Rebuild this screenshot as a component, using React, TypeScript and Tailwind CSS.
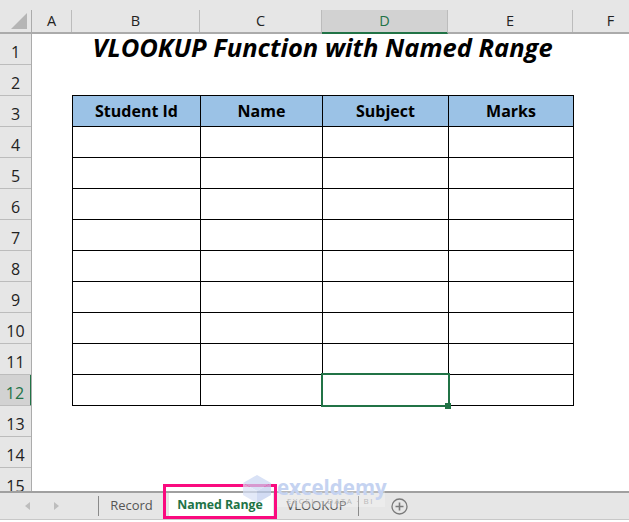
const columns = [
  { label: 'A', width: 'w-[40px]' },
  { label: 'B', width: 'w-[128px]' },
  { label: 'C', width: 'w-[122px]' },
  { label: 'D', width: 'w-[126px]', active: true },
  { label: 'E', width: 'w-[125px]' },
  { label: 'F', width: 'w-[76px]' },
];

const rowNumbers = [1, 2, 3, 4, 5, 6, 7, 8, 9, 10, 11, 12, 13, 14];
const headers = ['Student Id', 'Name', 'Subject', 'Marks'];
const cellWidths = ['w-[128px]', 'w-[122px]', 'w-[126px]', 'w-[125px]'];
const emptyRows = [4, 5, 6, 7, 8, 9, 10, 11, 12];

const App = () => {
  return (
    <div className="relative flex h-[522px] w-[629px] flex-col overflow-hidden bg-[#e6e6e6] font-['Open_Sans',sans-serif] text-[#222]">
      {/* Column headers */}
      <div className="mt-[10px] flex h-[24px] shrink-0 border-b-2 border-[#ababab]">
        <div className="flex w-[32px] shrink-0 items-end justify-end border-r border-[#ababab] pr-[4px] pb-[3px]">
          <svg width="16" height="16" viewBox="0 0 16 16">
            <path d="M16 0V16H0Z" fill="#b5b5b5" />
          </svg>
        </div>
        {columns.map((col) => (
          <div
            key={col.label}
            className={`flex shrink-0 items-center justify-center border-r border-[#bcbcbc] pb-[1px] text-[14.5px] ${col.width} ${
              col.active ? '-mb-[2px] border-b-2 border-b-[#217346] bg-[#d2d2d2] text-[#217346]' : ''
            }`}
          >
            {col.label}
          </div>
        ))}
      </div>

      <div className="flex h-[457px] shrink-0">
        {/* Row headers */}
        <div className="w-[32px] shrink-0 overflow-hidden border-r border-[#ababab]">
          {rowNumbers.map((n) => (
            <div
              key={n}
              className={`flex h-[31px] items-center justify-center border-b border-[#bcbcbc] pt-[5px] text-[16px] ${
                n === 12 ? '-mr-px border-r-2 border-r-[#217346] bg-[#d2d2d2] text-[#217346]' : ''
              }`}
            >
              {n}
            </div>
          ))}
          <div className="flex h-[31px] items-center justify-center pt-[5px] text-[16px]">15</div>
        </div>

        {/* Sheet */}
        <div className="relative flex-1 bg-white pl-[40px]">
          <div className="-mt-px flex h-[29px] w-[501px] items-center justify-center text-[25.5px] leading-none font-bold text-black italic">
            VLOOKUP Function with Named Range
          </div>
          <div className="h-[33px]" />
          <div className="w-[502px] border-r border-b border-black">
            <div className="flex h-[31px] bg-[#9bc2e6]">
              {headers.map((h, i) => (
                <div
                  key={h}
                  className={`flex items-center justify-center border-t border-l border-black text-[16px] font-bold text-black ${cellWidths[i]}`}
                >
                  {h}
                </div>
              ))}
            </div>
            {emptyRows.map((r) => (
              <div key={r} className="flex h-[31px]">
                {cellWidths.map((w) => (
                  <div key={w} className={`border-t border-l border-black ${w}`} />
                ))}
              </div>
            ))}
          </div>

          {/* Selected cell */}
          <div className="absolute top-[339px] left-[289px] h-[34px] w-[129px] border-2 border-[#217346]" />
          <div className="absolute top-[369px] left-[413px] h-[6px] w-[6px] bg-[#217346]" />
        </div>
      </div>

      {/* Sheet tabs */}
      <div className="flex h-[28px] shrink-0 items-center border-t-2 border-[#a0a0a0]">
        <div className="flex w-[98px] shrink-0 items-center pl-[25px]">
          <svg width="5" height="8" viewBox="0 0 5 8">
            <path d="M5 0V8L0 4Z" fill="#bdbdbd" />
          </svg>
          <svg className="ml-[24px]" width="5" height="8" viewBox="0 0 5 8">
            <path d="M0 0V8L5 4Z" fill="#bdbdbd" />
          </svg>
        </div>
        <div className="h-[20px] w-px shrink-0 bg-[#8a8a8a]" />
        <div className="flex w-[65px] shrink-0 justify-center text-[13px] text-[#555]">Record</div>
        <div className="ml-[5px] flex h-full w-[104px] shrink-0 items-center justify-center border-b-2 border-[#217346] bg-white pr-[2px] text-[12.3px] font-bold text-[#217346]">
          Named Range
        </div>
        <div className="flex w-[85px] shrink-0 justify-center pl-[2px] text-[13px] text-[#555]">VLOOKUP</div>
        <div className="h-[20px] w-px shrink-0 bg-[#8a8a8a]" />
        <svg className="ml-[32px]" width="17" height="17" viewBox="0 0 17 17" fill="none" stroke="#7a7a7a">
          <circle cx="8.5" cy="8.5" r="7.5" strokeWidth="1.3" />
          <path d="M8.5 4.5v8M4.5 8.5h8" strokeWidth="1.6" />
        </svg>
      </div>
      <div className="h-[3px] shrink-0 border-t border-[#c8c8c8] bg-white" />

      {/* Highlight around active tab */}
      <div className="absolute top-[484px] left-[163px] h-[35px] w-[114px] border-[3px] border-[#fa0a7f]" />

      {/* Watermark */}
      <svg className="absolute top-[475px] left-[243px] opacity-70" width="28" height="28" viewBox="0 0 28 28">
        <path d="M14 0 28 8 14 16 0 8Z" fill="#c9d6f3" />
        <path d="M0 8 14 16V28L0 20Z" fill="#d8e1f6" />
        <path d="M28 8 14 16V28L28 20Z" fill="#bfcdee" />
      </svg>
      <div className="absolute top-[491px] left-[277px] h-[16px] w-[108px] bg-white/25" />
      <div className="absolute top-[472px] left-[277px] text-[20.5px] leading-[30px] font-bold text-[#c5d3f1]">
        exceldemy
      </div>
      <div className="absolute top-[495px] left-[287px] text-[8px] tracking-[1.4px] text-[#b9b9b9]">
        EXCEL · DATA · BI
      </div>
    </div>
  );
};

export default App;
